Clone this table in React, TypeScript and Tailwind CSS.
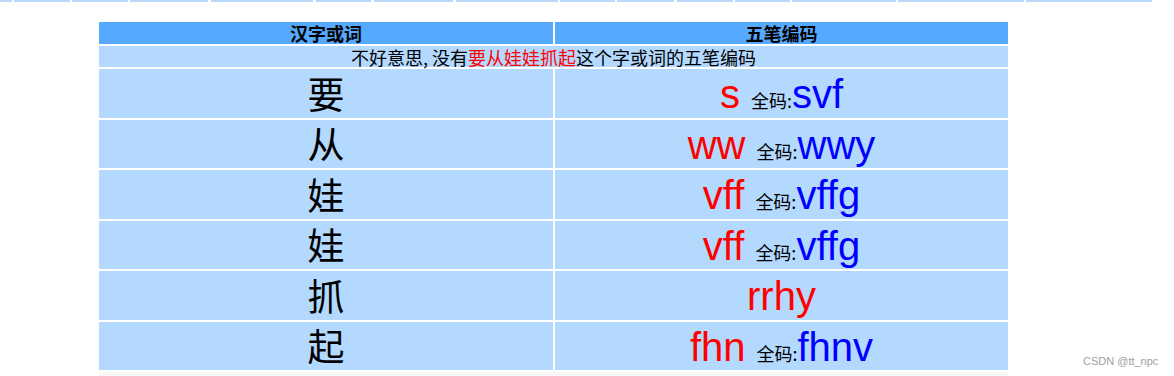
import React from "react";

const stripes: [number, number][] = [
  [0, 12], [14, 70], [72, 128], [130, 208], [211, 313], [316, 371], [374, 453],
  [456, 558], [560, 615], [617, 674], [677, 733], [735, 790], [792, 896], [898, 1024], [1026, 1152],
];

const rows: { ch: string; short: string; full?: string }[] = [
  { ch: "要", short: "s", full: "svf" },
  { ch: "从", short: "ww", full: "wwy" },
  { ch: "娃", short: "vff", full: "vffg" },
  { ch: "娃", short: "vff", full: "vffg" },
  { ch: "抓", short: "rrhy" },
  { ch: "起", short: "fhn", full: "fhnv" },
];

const cjk = { fontFamily: '"Noto Sans CJK SC", "Noto Sans", sans-serif' };
const latin = { fontFamily: '"Liberation Sans", Arial, sans-serif' };

export default function App() {
  return (
    <div className="relative w-[1174px] h-[376px] overflow-hidden bg-white">
      <div className="flex h-[2px]">
        {stripes.map(([a, b], i) => (
          <div
            key={i}
            className="h-[2px] bg-[#b8dbfd] shrink-0"
            style={{ marginLeft: i === 0 ? a : a - stripes[i - 1][1], width: b - a }}
          />
        ))}
      </div>
      <div className="pt-[20px] pl-[99px]">
        <div className="grid grid-cols-[454px_453px] gap-[2px]" style={cjk}>
          <div className="h-[22px] bg-[#55aaff] flex items-center justify-center text-[18px] font-bold text-black leading-none">
            汉字或词
          </div>
          <div className="h-[22px] bg-[#55aaff] flex items-center justify-center text-[18px] font-bold text-black leading-none">
            五笔编码
          </div>
          <div className="col-span-2 h-[21px] bg-[#b3d9ff] flex items-center justify-center text-[18px] text-black leading-none">
            <span>
              不好意思, 没有<span className="text-[#ff0000]">要从娃娃抓起</span>这个字或词的五笔编码
            </span>
          </div>
          {rows.map((r, i) => (
            <React.Fragment key={i}>
              <div className="h-[48.5px] bg-[#b3d9ff] flex items-center justify-center text-[37px] text-black leading-none">
                {r.ch}
              </div>
              <div className="h-[48.5px] bg-[#b3d9ff] flex items-center justify-center">
                <div className="flex items-baseline leading-none pt-[2px]">
                  <span className="text-[40px] text-[#ff0000]" style={latin}>
                    {r.short}
                  </span>
                  {r.full && (
                    <>
                      <span className="text-[18px] text-black ml-[11px]" style={cjk}>
                        全码:
                      </span>
                      <span className="text-[40px] text-[#0000ff]" style={latin}>
                        {r.full}
                      </span>
                    </>
                  )}
                </div>
              </div>
            </React.Fragment>
          ))}
          <div className="col-span-2 h-[20px] bg-[#f7f7f7]" />
        </div>
      </div>
      <div
        className="absolute left-[1083px] top-[356px] text-[11px] text-[#a0a0a0] leading-none"
        style={latin}
      >
        CSDN @tt_npc
      </div>
    </div>
  );
}
